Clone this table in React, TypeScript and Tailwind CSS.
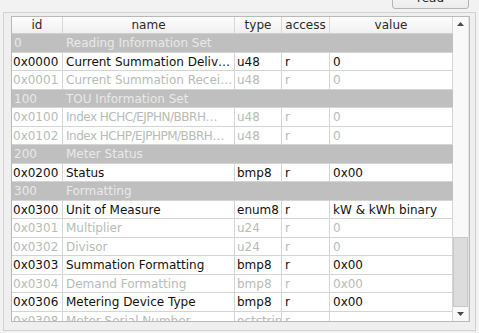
import React from 'react';

type Row =
    | { kind: 'section'; id: string; name: string }
    | { kind: 'attr'; id: string; name: string; type: string; access: string; value: string; enabled: boolean; tight?: boolean };

const rows: Row[] = [
    { kind: 'section', id: '0', name: 'Reading Information Set' },
    { kind: 'attr', id: '0x0000', name: 'Current Summation Deliv…', type: 'u48', access: 'r', value: '0', enabled: true },
    { kind: 'attr', id: '0x0001', name: 'Current Summation Recei…', type: 'u48', access: 'r', value: '0', enabled: false },
    { kind: 'section', id: '100', name: 'TOU Information Set' },
    { kind: 'attr', id: '0x0100', name: 'Index HCHC/EJPHN/BBRH…', type: 'u48', access: 'r', value: '0', enabled: false, tight: true },
    { kind: 'attr', id: '0x0102', name: 'Index HCHP/EJPHPM/BBRH…', type: 'u48', access: 'r', value: '0', enabled: false, tight: true },
    { kind: 'section', id: '200', name: 'Meter Status' },
    { kind: 'attr', id: '0x0200', name: 'Status', type: 'bmp8', access: 'r', value: '0x00', enabled: true },
    { kind: 'section', id: '300', name: 'Formatting' },
    { kind: 'attr', id: '0x0300', name: 'Unit of Measure', type: 'enum8', access: 'r', value: 'kW & kWh binary', enabled: true },
    { kind: 'attr', id: '0x0301', name: 'Multiplier', type: 'u24', access: 'r', value: '0', enabled: false },
    { kind: 'attr', id: '0x0302', name: 'Divisor', type: 'u24', access: 'r', value: '0', enabled: false },
    { kind: 'attr', id: '0x0303', name: 'Summation Formatting', type: 'bmp8', access: 'r', value: '0x00', enabled: true },
    { kind: 'attr', id: '0x0304', name: 'Demand Formatting', type: 'bmp8', access: 'r', value: '0x00', enabled: false },
    { kind: 'attr', id: '0x0306', name: 'Metering Device Type', type: 'bmp8', access: 'r', value: '0x00', enabled: true },
    { kind: 'attr', id: '0x0308', name: 'Meter Serial Number', type: 'octstring', access: 'r', value: '', enabled: false },
];

const cols = 'grid grid-cols-[51px_172px_47px_48px_123px]';
const cell = 'flex items-center overflow-hidden whitespace-nowrap border-r border-[#d4d4d4]';

function HeaderRow() {
    const labels = ['id', 'name', 'type', 'access', 'value'];
    return (
        <div className={`${cols} h-[18px] border-b border-[#cfcfcf] bg-gradient-to-b from-[#fdfdfd] to-[#f0f0f0]`}>
            {labels.map(l => (
                <div key={l} className="flex items-center justify-center border-r border-[#d8d8d8] text-[#2a2a2a]">
                    {l}
                </div>
            ))}
        </div>
    );
}

function TableRow({ row }: { row: Row }) {
    if (row.kind === 'section') {
        return (
            <div className={`${cols} h-[18.5px] shrink-0 border-b border-[#d4d4d4] bg-[#bfbfbf] text-[#e9e9e9]`}>
                <div className="flex items-center pl-[2px]">{row.id}</div>
                <div className="col-span-4 flex items-center pl-[3px]">{row.name}</div>
            </div>
        );
    }
    const text = row.enabled ? 'text-[#111111]' : 'text-[#b6bcb6]';
    return (
        <div className={`${cols} h-[18.5px] shrink-0 border-b border-[#d4d4d4] bg-white ${text}`}>
            <div className={`${cell} pl-[1px]`}>{row.id}</div>
            <div className={`${cell} pl-[3px] ${row.tight ? 'tracking-[-0.5px]' : ''}`}>{row.name}</div>
            <div className={`${cell} pl-[2px]`}>{row.type}</div>
            <div className={`${cell} pl-[3px]`}>{row.access}</div>
            <div className={`${cell} pl-[3px]`}>{row.value}</div>
        </div>
    );
}

function ScrollBar() {
    return (
        <div className="flex w-[16px] flex-col border-r border-[#e4e4e4] bg-[#f9f9f9]">
            <div className="flex h-[14px] items-center justify-center">
                <svg width="7" height="4" viewBox="0 0 7 4"><path d="M0 4 L3.5 0 L7 4 Z" fill="#4a4a4a" /></svg>
            </div>
            <div className="h-[206px]" />
            <div className="h-[70px] border border-[#c9c9c9] bg-[#dcdcdc]" />
            <div className="flex h-[14px] items-center justify-center">
                <svg width="7" height="4" viewBox="0 0 7 4"><path d="M0 0 L7 0 L3.5 4 Z" fill="#4a4a4a" /></svg>
            </div>
        </div>
    );
}

export default function App() {
    return (
        <div className="h-[333px] w-[479px] overflow-hidden bg-[#f2f2f2] font-['DejaVu_Sans',sans-serif] text-[12px] leading-none">
            <div className="flex justify-end pr-[10px]">
                <button className="-mt-[13px] h-[22px] w-[77px] rounded-[3px] border border-[#b4b4b4] bg-gradient-to-b from-[#fafafa] to-[#ececec] text-[#222222]">
                    read
                </button>
            </div>
            <div className="mx-[3px] mt-[3px] h-[319px] border border-[#d2d2d2] bg-[#efefef] pl-[7px] pt-[3px]">
                <div className="flex h-[306px] w-[459px] border border-[#b9b9b9] bg-white">
                    <div className="flex w-[441px] flex-col overflow-hidden">
                        <HeaderRow />
                        <div className="flex flex-col overflow-hidden">
                            {rows.map(r => (
                                <TableRow key={r.id} row={r} />
                            ))}
                        </div>
                    </div>
                    <ScrollBar />
                </div>
            </div>
        </div>
    );
}
